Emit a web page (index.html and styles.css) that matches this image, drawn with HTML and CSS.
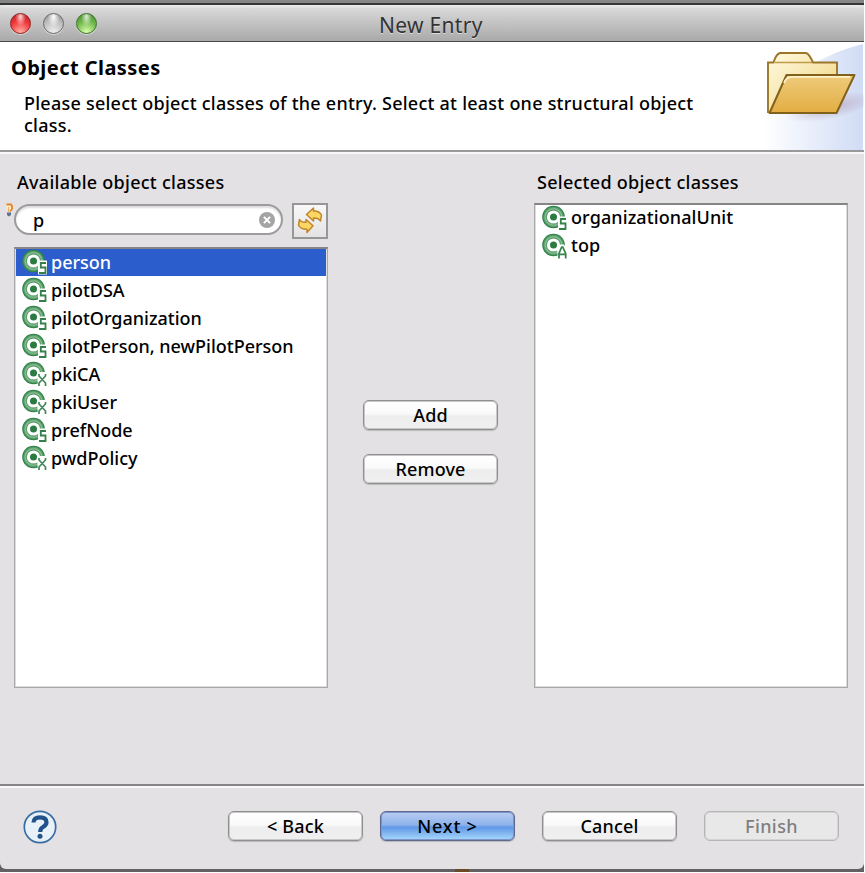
FILE: index.html
```html
<!DOCTYPE html>
<html lang="en">

<head>
    <meta charset="UTF-8">
    <meta name="viewport" content="width=device-width, initial-scale=1.0">
    <title>New Entry</title>
    <link rel="stylesheet" href="styles.css">
</head>

<body>
    <!-- Icon shapes shared by the lists -->
    <svg class="sprite" width="0" height="0">
        <defs>
            <radialGradient id="ringFill">
                <stop offset="0.58" stop-color="#3f8b55"/>
                <stop offset="0.72" stop-color="#8abf94"/>
                <stop offset="0.82" stop-color="#5fa471"/>
                <stop offset="0.95" stop-color="#2f8048"/>
            </radialGradient>
            <symbol id="ring" viewBox="0 0 26 26">
                <circle cx="11.5" cy="12" r="11.3" fill="url(#ringFill)"/>
                <circle cx="11.5" cy="12" r="6.600" fill="#fff"/>
                <circle cx="11.5" cy="12" r="3.500" fill="#2c7b40"/>
            </symbol>
            <symbol id="structural" viewBox="0 0 26 26">
                <use href="#ring"/>
                <path d="M16 11.500h9v14h-9z" fill="#fff"/>
                <path d="M24 14h-5.200v4.500h4.700v5.500h-6.500" fill="none" stroke="#33804a" stroke-width="1.800"/>
            </symbol>
            <symbol id="auxiliary" viewBox="0 0 26 26">
                <use href="#ring"/>
                <path d="M15 14l3-3h7v14h-9z" fill="#fff"/>
                <path d="M17 13v2l6.500 7v3M23.500 13v2l-6.500 7v3" fill="none" stroke="#43885a" stroke-width="1.700"/>
            </symbol>
            <symbol id="abstract" viewBox="0 0 26 26">
                <use href="#ring"/>
                <path d="M15 16l3-4.500h4l3 5v9h-9z" fill="#fff"/>
                <path d="M17 25.500v-5l2.700-6.500h1l3 6.500v5M17 21.300h6.500" fill="none" stroke="#33804a" stroke-width="1.700"/>
            </symbol>
        </defs>
    </svg>

    <div class="window">
        <div class="titlebar">
            <div class="lights">
                <span class="light red"></span>
                <span class="light gray"></span>
                <span class="light green"></span>
            </div>
            <div class="title">New Entry</div>
        </div>

        <div class="header">
            <div class="header-text">
                <h1>Object Classes</h1>
                <p>Please select object classes of the entry. Select at least one structural object<br>class.</p>
            </div>
            <svg class="banner" width="125" height="108" viewBox="0 0 125 108">
                <defs>
                    <linearGradient id="sky" x1="0" y1="0" x2="1" y2="0">
                        <stop offset="0" stop-color="#fff"/>
                        <stop offset="1" stop-color="#d0dcf5"/>
                    </linearGradient>
                    <linearGradient id="folderBack" x1="0" y1="0" x2="1" y2="1">
                        <stop offset="0" stop-color="#fffbe2"/>
                        <stop offset="1" stop-color="#eed078"/>
                    </linearGradient>
                    <linearGradient id="folderFront" x1="0" y1="0" x2="0" y2="1">
                        <stop offset="0" stop-color="#efcb7c"/>
                        <stop offset="1" stop-color="#e2ad42"/>
                    </linearGradient>
                    <radialGradient id="shade">
                        <stop offset="0" stop-color="#b39db8" stop-opacity="0.7"/>
                        <stop offset="1" stop-color="#b39db8" stop-opacity="0"/>
                    </radialGradient>
                </defs>
                <path d="M24 108V66Q65 16 124 2V108z" fill="url(#sky)"/>
                <ellipse cx="92" cy="65" rx="46" ry="12" fill="url(#shade)" transform="rotate(-12 92 65)"/>
                <path d="M29 71V20.500H34.500Q37 12 41 11H67Q70 11.500 74 20.500H98V40" fill="url(#folderBack)" stroke="#9b7628" stroke-width="1.900"/>
                <path d="M36 20.500H73" stroke="#c19a4a" stroke-width="1.500"/>
                <path d="M30.500 71L47.500 33H115.500L97.500 71z" fill="url(#folderFront)" stroke="#82611b" stroke-width="2" stroke-linejoin="round"/>
                <path d="M45 41Q47 35 53 34.800H111" fill="none" stroke="#fff2cb" stroke-width="1.800"/>
            </svg>
        </div>

        <div class="content">
            <div class="column">
                <label for="filter">Available object classes</label>
                <div class="filter-row">
                    <svg class="hint" width="8" height="14" viewBox="0 0 8 14">
                        <path d="M1 1H6L7 2.500V6L5 9H3L1 6.500z" fill="#fff0c8"/>
                        <path d="M1 1.500H5.500L6.500 3V6L4.500 8.500" fill="none" stroke="#e58325" stroke-width="1.800"/>
                        <path d="M3 4v5" stroke="#f0b070" stroke-width="1.200"/>
                        <path d="M1.500 9.500H5.500V12L3.500 13.500L1.500 12z" fill="#5d7196"/>
                    </svg>
                    <div class="search">
                        <input id="filter" type="text" value="p">
                        <svg width="18" height="18" viewBox="0 0 18 18">
                            <circle cx="9" cy="9" r="9" fill="#a4a4a4"/>
                            <path d="M5.500 5.500l7 7M12.500 5.500l-7 7" stroke="#fff" stroke-width="2.300"/>
                        </svg>
                    </div>
                    <button class="refresh">
                        <svg width="26" height="28" viewBox="0 0 26 28">
                            <g fill="#fbd665" stroke="#c0862d" stroke-width="1.500" stroke-linejoin="round">
                                <path d="M9.500 7.500L16.500 1V4Q22 3.500 24.500 8L23.500 14Q21.500 10.800 16.500 11V14z"/>
                                <path d="M2.500 12.500Q4 15.500 9 15.300V12.500L16 18.800L10 25.500V22.300Q3.500 22.500 1.500 18z"/>
                            </g>
                        </svg>
                    </button>
                </div>
                <ul class="list available">
                    <li class="selected"><svg><use href="#structural"/></svg>person</li>
                    <li><svg><use href="#structural"/></svg>pilotDSA</li>
                    <li><svg><use href="#structural"/></svg>pilotOrganization</li>
                    <li><svg><use href="#structural"/></svg>pilotPerson, newPilotPerson</li>
                    <li><svg><use href="#auxiliary"/></svg>pkiCA</li>
                    <li><svg><use href="#auxiliary"/></svg>pkiUser</li>
                    <li><svg><use href="#structural"/></svg>prefNode</li>
                    <li><svg><use href="#auxiliary"/></svg>pwdPolicy</li>
                </ul>
            </div>

            <div class="actions">
                <button class="btn">Add</button>
                <button class="btn">Remove</button>
            </div>

            <div class="column">
                <label>Selected object classes</label>
                <ul class="list chosen">
                    <li><svg><use href="#structural"/></svg>organizationalUnit</li>
                    <li><svg><use href="#abstract"/></svg>top</li>
                </ul>
            </div>
        </div>

        <div class="footer">
            <svg class="help" width="34" height="34" viewBox="0 0 34 34">
                <circle cx="17" cy="17" r="15.700" fill="#e9f1f8" stroke="#376da2" stroke-width="1.700"/>
                <path d="M10.500 12.500Q10.500 7.300 17 7.300Q23.500 7.300 23.500 12.300Q23.500 15 20 17Q17.200 18.500 17.200 22" fill="none" stroke="#215289" stroke-width="4.200"/>
                <circle cx="17" cy="26.300" r="2.500" fill="#215289"/>
            </svg>
            <div class="footer-buttons">
                <button class="btn">&lt; Back</button>
                <button class="btn primary">Next &gt;</button>
                <button class="btn cancel">Cancel</button>
                <button class="btn finish" disabled>Finish</button>
            </div>
        </div>
    </div>
    <div class="desktop"></div>
</body>

</html>
```
FILE: styles.css
```css
* {
    box-sizing: border-box;
}

body {
    margin: 0;
    width: 865px;
    height: 873px;
    overflow: hidden;
    background: linear-gradient(#858585 50%, #616161 50%) no-repeat 0 0 / 864px 872px #fff;
    padding-top: 3px;
    font-family: "Noto Sans", "Open Sans", sans-serif;
    font-size: 18px;
    font-weight: 500;
    color: #000;
}

.sprite {
    position: absolute;
}

.window {
    width: 864px;
    height: 866px;
    border-top: 2px solid #353535;
    border-radius: 0 0 6px 6px;
    background: #e3e1e4;
    overflow: hidden;
}

.titlebar {
    display: flex;
    height: 37px;
    padding: 8px 0 0 10px;
    background: linear-gradient(#eee, #d8d8d8 10%, #a9a9a9);
    border-bottom: 1px solid #4b4b4b;
    border-radius: 5px 5px 0 0;
}

.lights {
    display: flex;
    gap: 12px;
    width: 369px;
}

.light {
    width: 21px;
    height: 21px;
    border-radius: 50%;
    border: 1px solid #6b6b6b;
    box-shadow: 0 1px 0 #ddd;
}

.red {
    border-color: #912020;
    background: radial-gradient(ellipse at 50% 15%, #ffffffcc, transparent 40%), radial-gradient(circle at 50% 95%, #ffb0a5, #f0373b 55%, #b11b20);
}

.gray {
    background: radial-gradient(ellipse at 50% 15%, #fff, transparent 45%), radial-gradient(circle at 50% 95%, #eee, #bbb 60%, #888);
}

.green {
    border-color: #3c702a;
    background: radial-gradient(ellipse at 50% 15%, #ffffffcc, transparent 40%), radial-gradient(circle at 50% 95%, #dcffaa, #70b84c 55%, #42852b);
}

.title {
    margin-top: -2px;
    font-size: 21px;
    font-weight: 400;
    line-height: 28px;
    letter-spacing: 0.3px;
    color: #333;
    text-shadow: 0 1px 0 #ddd;
}

.header {
    display: flex;
    height: 110px;
    background: #fff;
    border-bottom: 2px solid #999;
}

.header-text {
    width: 739px;
    padding: 13px 0 0 11px;
}

h1 {
    margin: 0;
    font-size: 20px;
    line-height: 26px;
    letter-spacing: 0.45px;
}

p {
    margin: 11px 0 0 13px;
    line-height: 22px;
    letter-spacing: 0.24px;
    white-space: nowrap;
}

.content {
    display: flex;
    height: 632px;
    padding: 18px 16px 0 14px;
    border-top: 2px solid #f8f8f8;
}

.column {
    display: flex;
    flex-direction: column;
    width: 314px;
}

label {
    height: 31px;
    padding-left: 3px;
    line-height: 21px;
    letter-spacing: 0.27px;
}

.filter-row {
    display: flex;
    height: 44px;
    margin-left: -9px;
}

.hint {
    flex: none;
    width: 9px;
}

.search {
    display: flex;
    align-items: center;
    width: 269px;
    height: 31px;
    margin-top: 1px;
    padding: 0 6px 0 17px;
    border: 2px solid #9c9c9c;
    border-radius: 16px;
    background: #fff;
    box-shadow: inset 0 2px 2px #ddd;
}

.search input {
    width: 226px;
    padding: 1px 0 0;
    border: 0;
    outline: 0;
    background: transparent;
    font: inherit;
}

.refresh {
    display: flex;
    align-items: center;
    justify-content: center;
    width: 36px;
    height: 36px;
    margin-left: 9px;
    padding: 0;
    border: 2px solid #979797;
    background: linear-gradient(#f8f8f8, #e3e3e3);
}

.list {
    height: 485px;
    margin: 0;
    padding: 0;
    list-style: none;
    background: #fff;
    border: 1px solid #a8a8a8;
    border-top: 2px solid #858585;
    box-shadow: inset 1px 0 0 #ddd, inset -1px -1px 0 #ddd;
}

.available {
    height: 441px;
}

.list li {
    display: flex;
    height: 28px;
    padding-left: 7px;
    line-height: 27px;
}

.list svg {
    flex: none;
    width: 26px;
    height: 26px;
    margin-right: 3px;
}

.list .selected {
    margin: 0 1px;
    padding-left: 6px;
    background: linear-gradient(#2b5dcd, #2b5dcd) no-repeat 0 0 / 100% 27px;
    color: #fff;
}

.chosen li {
    line-height: 24px;
    letter-spacing: 0.1px;
}

.actions {
    display: flex;
    flex-direction: column;
    gap: 24px;
    width: 206px;
    padding: 228px 0 0 35px;
}

.btn {
    width: 135px;
    height: 30px;
    padding: 0;
    border: 1px solid #8f8f8f;
    border-radius: 6px;
    background: linear-gradient(#fff 0%, #fafafa 45%, #ededed 55%, #f0f0f0);
    box-shadow: inset 0 0 0 1px #c8c8c8, 0 1px 1px #bbb;
    font: inherit;
    line-height: 28px;
    letter-spacing: 0.15px;
    color: #000;
}

.primary {
    border-color: #5f6990;
    background: linear-gradient(#b9cdf1, #8fb3ec 45%, #6198e7 55%, #a7d9fb);
    box-shadow: inset 0 0 0 1px #7d93c9, 0 1px 1px #bbb;
    letter-spacing: 0.8px;
}

.btn:disabled {
    border-color: #b5b5b5;
    background: #e9e8e9;
    box-shadow: inset 0 0 0 1px #d4d4d4;
    color: #7e7e7e;
    letter-spacing: 0.4px;
}

.footer {
    display: flex;
    height: 85px;
    padding: 24px 0 0 23px;
    border-top: 2px solid #858585;
    box-shadow: inset 0 2px 0 #f8f8f8;
}

.footer-buttons {
    display: flex;
    gap: 17px;
    padding: 1px 0 0 171px;
}

.cancel,
.finish {
    margin-left: 10px;
}

/* dock icon peeking out under the window */
.desktop {
    width: 14px;
    height: 3px;
    margin-left: 455px;
    background: #6a4a24;
}
```
